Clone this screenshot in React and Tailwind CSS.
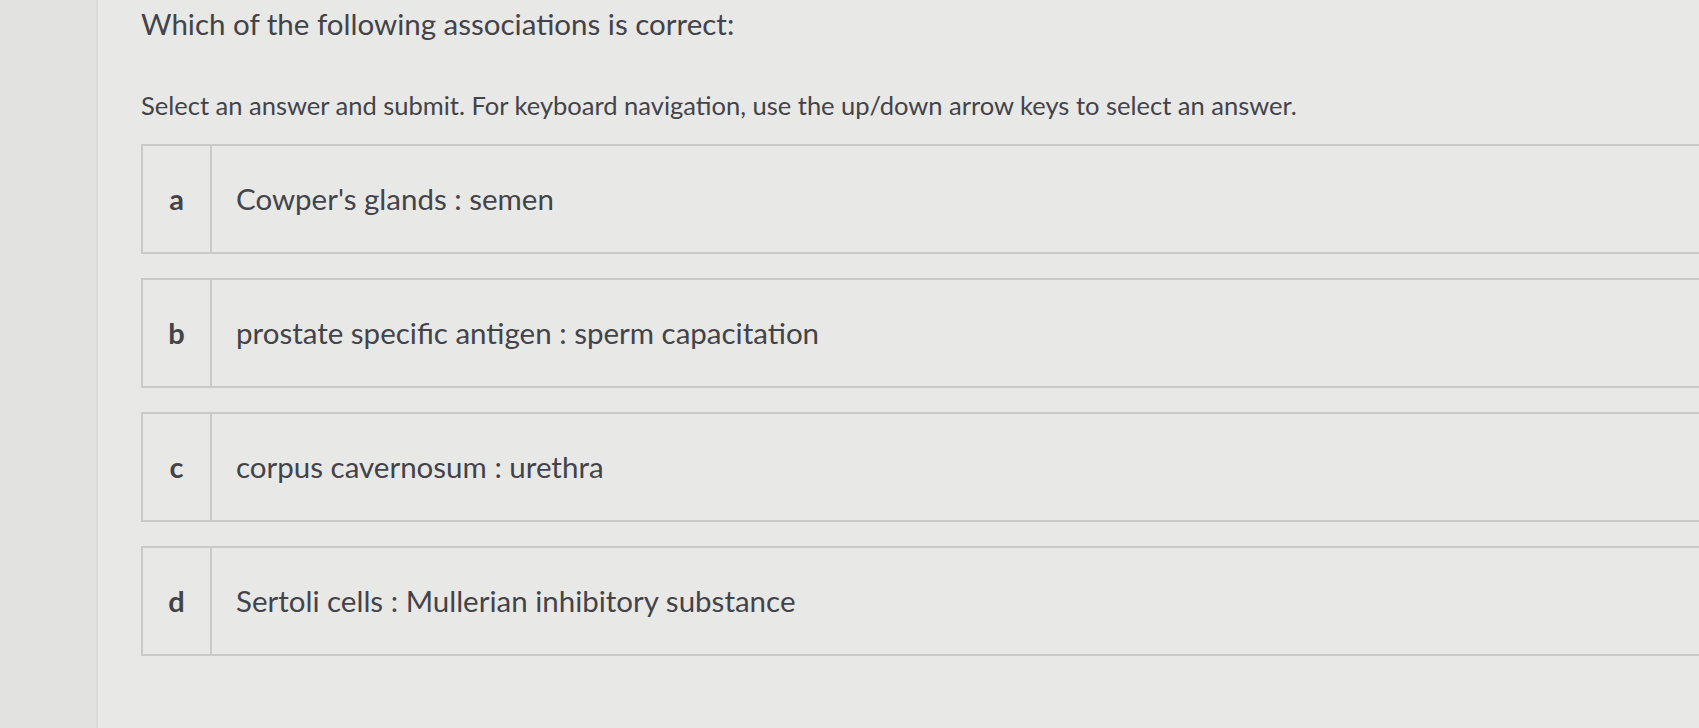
const answers = [
    { key: "a", text: "Cowper's glands : semen" },
    { key: "b", text: "prostate specific antigen : sperm capacitation" },
    { key: "c", text: "corpus cavernosum : urethra" },
    { key: "d", text: "Sertoli cells : Mullerian inhibitory substance" },
];

export default function App() {
    return (
        <div className="flex h-[728px] w-full overflow-hidden bg-[#e8e8e6] font-['Lato',sans-serif] text-[#434349]">
            {/* left gutter */}
            <div className="w-[98px] shrink-0 border-r-2 border-[#dadad8] bg-[#e2e2e0]" />

            {/* question */}
            <div className="min-w-0 flex-1 pl-[43px] pt-[5px]">
                <h1 className="text-[29.5px] leading-[38px]">
                    Which of the following associations is correct:
                </h1>
                <p className="mt-[46px] text-[25.5px] leading-[32px]">
                    Select an answer and submit. For keyboard navigation, use the
                    up/down arrow keys to select an answer.
                </p>

                <div className="mt-[23px] flex w-[1700px] flex-col gap-[24px]">
                    {answers.map((a) => (
                        <div
                            key={a.key}
                            className="flex h-[110px] items-stretch border-2 border-[#c9c9c7]"
                        >
                            <div className="flex w-[69px] shrink-0 items-center justify-center border-r-2 border-[#c9c9c7] text-[29px] font-bold">
                                {a.key}
                            </div>
                            <div className="flex items-center pl-[24px] text-[29.5px]">
                                {a.text}
                            </div>
                        </div>
                    ))}
                </div>
            </div>
        </div>
    );
}
